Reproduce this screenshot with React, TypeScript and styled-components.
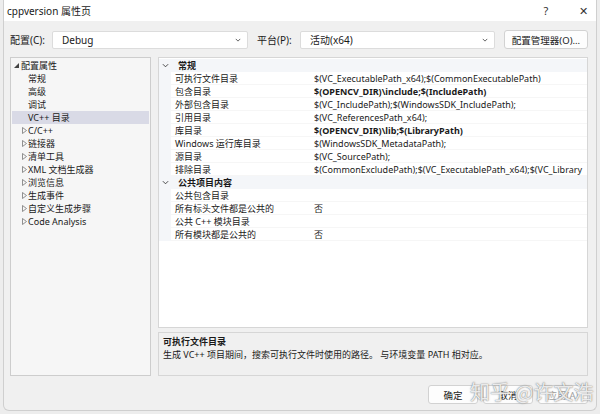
import React from "react";
import styled, { createGlobalStyle } from "styled-components";

const Global = createGlobalStyle`
  html, body { margin: 0; padding: 0; background: #f3f3f3; }
  body { font-family: "Noto Sans", "Noto Sans CJK SC", sans-serif; color: #1a1a1a; }
  * { box-sizing: border-box; }
`;

const FONT = `"Noto Sans", "Noto Sans CJK SC", sans-serif`;

const Page = styled.div`
  position: relative;
  width: 600px;
  height: 414px;
  overflow: hidden;
  background: #ededed;
`;

const Dialog = styled.div`
  margin-left: 3px;
  width: 594px;
  height: 411px;
  display: flex;
  flex-direction: column;
  background: #f0f0f0;
  border: 1px solid #cfcfcf;
  border-top: none;
  border-radius: 0 0 6px 6px;
  font-family: ${FONT};
  font-size: 9px;
`;

const TitleBar = styled.div`
  height: 21px;
  flex: none;
  display: flex;
  align-items: center;
  background: #ffffff;
  padding-left: 3px;
`;

const Title = styled.div`
  font-size: 10px;
  flex: 1;
`;

const TitleButton = styled.div<{ $gap: number }>`
  width: 26px;
  margin-right: ${(p) => p.$gap}px;
  text-align: center;
  font-size: 11px;
  color: #333;
`;

const ConfigRow = styled.div`
  margin-top: 9px;
  height: 19px;
  flex: none;
  display: flex;
  align-items: center;
  padding: 0 8px 0 6px;
`;

const Label = styled.div<{ $w: number }>`
  width: ${(p) => p.$w}px;
  font-size: 10px;
  flex: none;
`;

const Combo = styled.div<{ $w: number }>`
  width: ${(p) => p.$w}px;
  height: 18px;
  flex: none;
  display: flex;
  align-items: center;
  padding: 0 6px 0 9px;
  background: #ffffff;
  border: 1px solid #dcdcdc;
  border-radius: 2px;
  font-size: 10px;
`;

const ComboText = styled.span`
  flex: 1;
`;

const Spacer = styled.div<{ $w: number }>`
  width: ${(p) => p.$w}px;
  flex: none;
`;

const PushButton = styled.div<{ $w: number; $disabled?: boolean }>`
  width: ${(p) => p.$w}px;
  height: 19px;
  flex: none;
  display: flex;
  align-items: center;
  justify-content: center;
  background: #fdfdfd;
  border: 1px solid #d2d2d2;
  border-radius: 3px;
  font-size: 9.5px;
  color: ${(p) => (p.$disabled ? "#a0a0a0" : "#1a1a1a")};
`;

const Main = styled.div`
  margin-top: 8px;
  height: 319px;
  flex: none;
  display: flex;
  gap: 7px;
  padding: 0 8px 0 6px;
`;

const Tree = styled.div`
  width: 141px;
  flex: none;
  background: #f6f6f6;
  border: 1px solid #cdcdcd;
  padding-top: 1px;
`;

const TreeRow = styled.div<{ $indent: number; $selected?: boolean }>`
  height: 13px;
  display: flex;
  align-items: center;
  padding-left: ${(p) => p.$indent}px;
  margin: 0 1px;
  background: ${(p) => (p.$selected ? "#d9dae6" : "transparent")};
  white-space: nowrap;
`;

const Expander = styled.span`
  width: 6px;
  height: 13px;
  display: inline-flex;
  align-items: center;
  flex: none;
`;

const RightCol = styled.div`
  flex: 1;
  display: flex;
  flex-direction: column;
  gap: 4px;
`;

const Grid = styled.div`
  height: 271px;
  flex: none;
  background: #ffffff;
  border: 1px solid #d6d6d6;
  padding-top: 1px;
  overflow: hidden;
`;

const GridRow = styled.div<{ $category?: boolean }>`
  height: 13px;
  display: grid;
  grid-template-columns: 12px 143px 1fr;
  align-items: center;
  background: ${(p) => (p.$category ? "#f4f6f9" : "#ffffff")};
  border-bottom: 1px solid ${(p) => (p.$category ? "#f4f6f9" : "#f6f6f6")};
  white-space: nowrap;
  line-height: 12px;
`;

const Margin = styled.div`
  height: 13px;
  background: #f4f6f9;
  display: flex;
  align-items: center;
  justify-content: center;
`;

const CatName = styled.div`
  grid-column: 2 / 4;
  font-weight: bold;
  padding-left: 7px;
`;

const PropName = styled.div`
  padding-left: 4px;
  overflow: hidden;
`;

const PropValue = styled.div<{ $bold?: boolean }>`
  font-weight: ${(p) => (p.$bold ? "bold" : "normal")};
  overflow: hidden;
`;

const Desc = styled.div`
  flex: 1;
  background: #f0f0f0;
  border: 1px solid #d6d6d6;
  padding: 3px 4px;
  line-height: 12.5px;
`;

const DescTitle = styled.div`
  font-weight: bold;
`;

const Footer = styled.div`
  margin-top: 9px;
  display: flex;
  justify-content: flex-end;
  gap: 5px;
  padding-right: 8px;
`;

const Watermark = styled.div`
  position: absolute;
  left: 470px;
  top: 380px;
  font-family: "Noto Sans CJK SC", sans-serif;
  font-size: 20px;
  line-height: 24px;
  color: rgba(255, 255, 255, 0.85);
  text-shadow: 0 0 1px rgba(90, 90, 90, 0.8), 0 0 2px rgba(120, 120, 120, 0.5);
  white-space: nowrap;
  pointer-events: none;
`;

const ChevronDown = ({ size = 7 }: { size?: number }) => (
  <svg width={size} height={size} viewBox="0 0 8 8">
    <path d="M1 2.5 L4 5.5 L7 2.5" fill="none" stroke="#333" strokeWidth="1" />
  </svg>
);

const Expanded = () => (
  <svg width="5" height="5" viewBox="0 0 5 5">
    <path d="M5 0 L5 5 L0 5 Z" fill="#444" />
  </svg>
);

const Collapsed = () => (
  <svg width="5" height="7" viewBox="0 0 5 7">
    <path d="M0.5 0.5 L4.5 3.5 L0.5 6.5 Z" fill="none" stroke="#777" strokeWidth="0.8" />
  </svg>
);

const treeItems: { label: string; kind: "leaf" | "collapsed"; selected?: boolean }[] = [
  { label: "常规", kind: "leaf" },
  { label: "高级", kind: "leaf" },
  { label: "调试", kind: "leaf" },
  { label: "VC++ 目录", kind: "leaf", selected: true },
  { label: "C/C++", kind: "collapsed" },
  { label: "链接器", kind: "collapsed" },
  { label: "清单工具", kind: "collapsed" },
  { label: "XML 文档生成器", kind: "collapsed" },
  { label: "浏览信息", kind: "collapsed" },
  { label: "生成事件", kind: "collapsed" },
  { label: "自定义生成步骤", kind: "collapsed" },
  { label: "Code Analysis", kind: "collapsed" },
];

type Prop = { name: string; value: string; bold?: boolean };
const categories: { name: string; props: Prop[] }[] = [
  {
    name: "常规",
    props: [
      { name: "可执行文件目录", value: "$(VC_ExecutablePath_x64);$(CommonExecutablePath)" },
      { name: "包含目录", value: "$(OPENCV_DIR)\\include;$(IncludePath)", bold: true },
      { name: "外部包含目录", value: "$(VC_IncludePath);$(WindowsSDK_IncludePath);" },
      { name: "引用目录", value: "$(VC_ReferencesPath_x64);" },
      { name: "库目录", value: "$(OPENCV_DIR)\\lib;$(LibraryPath)", bold: true },
      { name: "Windows 运行库目录", value: "$(WindowsSDK_MetadataPath);" },
      { name: "源目录", value: "$(VC_SourcePath);" },
      { name: "排除目录", value: "$(CommonExcludePath);$(VC_ExecutablePath_x64);$(VC_Library" },
    ],
  },
  {
    name: "公共项目内容",
    props: [
      { name: "公共包含目录", value: "" },
      { name: "所有标头文件都是公共的", value: "否" },
      { name: "公共 C++ 模块目录", value: "" },
      { name: "所有模块都是公共的", value: "否" },
    ],
  },
];

export default function App() {
  return (
    <Page>
      <Global />
      <Dialog>
        <TitleBar>
          <Title>cppversion 属性页</Title>
          <TitleButton $gap={11}>?</TitleButton>
          <TitleButton $gap={0}>✕</TitleButton>
        </TitleBar>
        <ConfigRow>
          <Label $w={42}>配置(C):</Label>
          <Combo $w={196}>
            <ComboText>Debug</ComboText>
            <ChevronDown size={6} />
          </Combo>
          <Spacer $w={9} />
          <Label $w={43}>平台(P):</Label>
          <Combo $w={195}>
            <ComboText>活动(x64)</ComboText>
            <ChevronDown size={6} />
          </Combo>
          <Spacer $w={9} />
          <PushButton $w={84}>配置管理器(O)...</PushButton>
        </ConfigRow>
        <Main>
          <Tree>
            <TreeRow $indent={2}>
              <Expander>
                <Expanded />
              </Expander>
              <span style={{ marginLeft: 1 }}>配置属性</span>
            </TreeRow>
            {treeItems.map((it) => (
              <TreeRow key={it.label} $indent={10} $selected={it.selected}>
                <Expander>{it.kind === "collapsed" ? <Collapsed /> : null}</Expander>
                <span>{it.label}</span>
              </TreeRow>
            ))}
          </Tree>
          <RightCol>
            <Grid>
              {categories.map((c) => (
                <React.Fragment key={c.name}>
                  <GridRow $category>
                    <Margin>
                      <ChevronDown size={7} />
                    </Margin>
                    <CatName>{c.name}</CatName>
                  </GridRow>
                  {c.props.map((p) => (
                    <GridRow key={p.name}>
                      <Margin />
                      <PropName>{p.name}</PropName>
                      <PropValue $bold={p.bold}>{p.value}</PropValue>
                    </GridRow>
                  ))}
                </React.Fragment>
              ))}
            </Grid>
            <Desc>
              <DescTitle>可执行文件目录</DescTitle>
              <div>生成 VC++ 项目期间，搜索可执行文件时使用的路径。 与环境变量 PATH 相对应。</div>
            </Desc>
          </RightCol>
        </Main>
        <Footer>
          <PushButton $w={50}>确定</PushButton>
          <PushButton $w={50}>取消</PushButton>
          <PushButton $w={50} $disabled>
            应用(A)
          </PushButton>
        </Footer>
      </Dialog>
      <Watermark>知乎 @许文浩</Watermark>
    </Page>
  );
}
